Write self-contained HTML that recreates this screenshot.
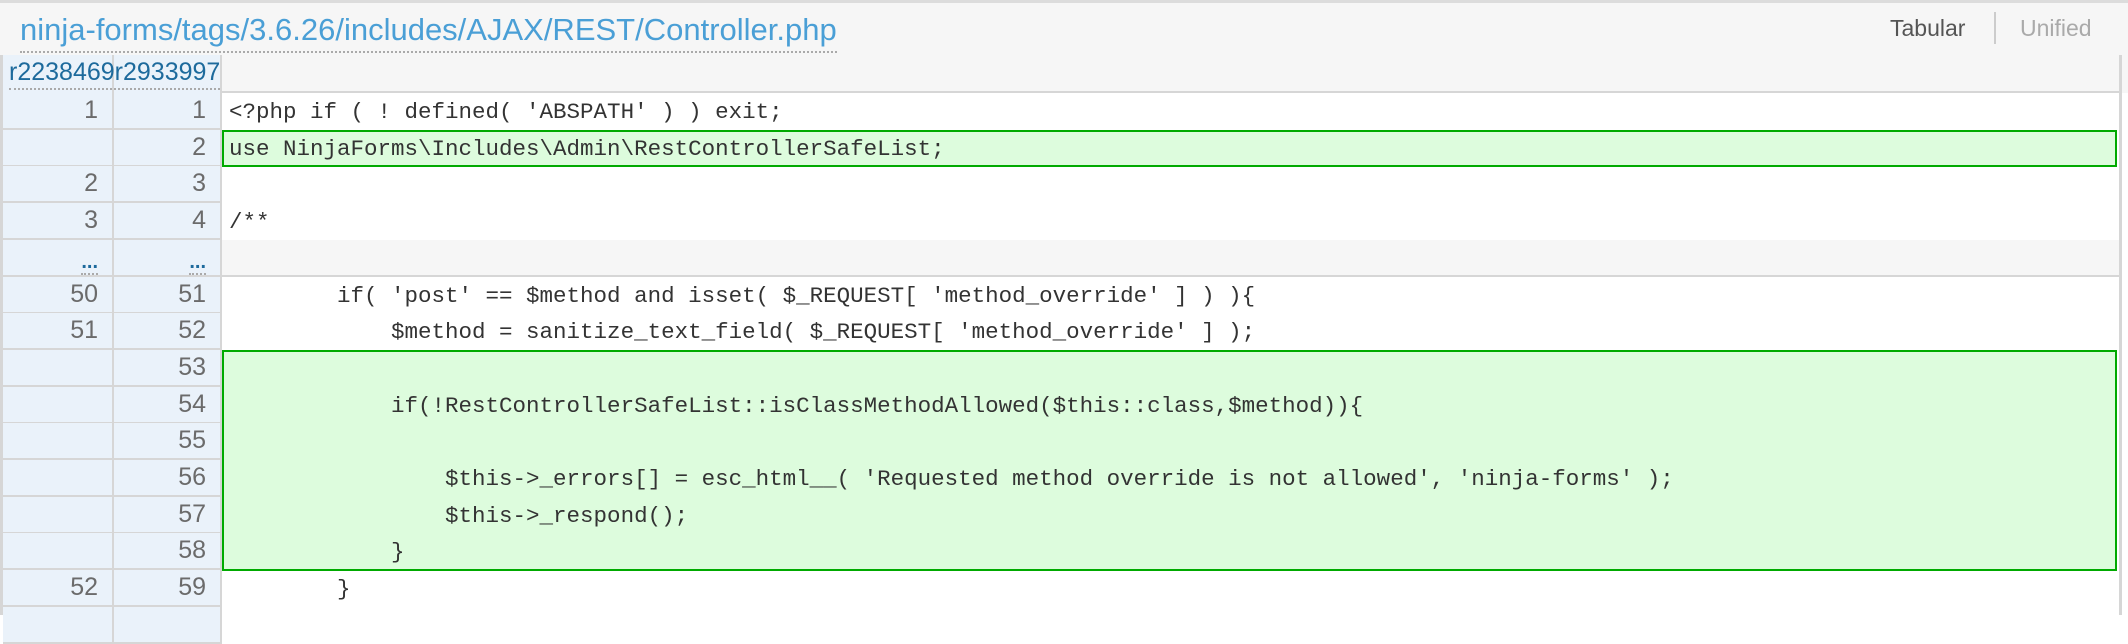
<!DOCTYPE html>
<html><head><meta charset="utf-8"><style>
*{margin:0;padding:0;box-sizing:border-box}
body{width:2128px;height:613px;overflow:hidden;background:#fff;position:relative;font-family:"Liberation Sans",sans-serif}
.a{position:absolute}
.ln{position:absolute;background:#eaf2fa;color:#6b6b6b;font-size:25px;text-align:right;padding-right:14px;line-height:35px;border-bottom:2px solid #d6d6d6}
.code{position:absolute;left:229px;font-family:"Liberation Mono",monospace;font-size:22.5px;color:#333;white-space:pre;line-height:36px}
</style></head><body>
<div class="a" style="left:0;top:0;width:2128px;height:3px;background:#dcdcdc"></div>
<div class="a" style="left:0;top:3px;width:2128px;height:90px;background:#f6f6f6"></div>
<div class="a" style="left:2119px;top:55px;width:3px;height:560px;background:#d6d6d6"></div>
<div class="a" style="left:20px;top:9px;font-size:31px;color:#4a9fd6;white-space:nowrap;border-bottom:2px dotted #aaa;line-height:42px">ninja-forms/tags/3.6.26/includes/AJAX/REST/Controller.php</div>
<div class="a" style="left:1890px;top:13px;font-size:23px;color:#555;line-height:30px">Tabular</div>
<div class="a" style="left:1994px;top:12px;width:2px;height:32px;background:#ccc"></div>
<div class="a" style="left:2020px;top:13px;font-size:23px;color:#aaa;line-height:30px">Unified</div>
<div class="a" style="left:3px;top:55px;width:219px;height:38px;background:#eaf2fa;border-right:2px solid #d6d6d6"></div>
<div class="a" style="left:112px;top:55px;width:2px;height:38px;background:#d6d6d6"></div>
<div class="a" style="left:222px;top:91px;width:1897px;height:2px;background:#d6d6d6"></div>
<div class="a" style="left:9px;top:57px;font-size:25px;color:#1d6a9c;line-height:31px;border-bottom:2px dotted #aaa;white-space:nowrap">r2238469r2933997</div>
<div class="a" style="left:0;top:55px;width:3px;height:560px;background:#d6d6d6"></div>
<div id="rows"></div>
<script>
var rows=[["1","1","<?php if ( ! defined( 'ABSPATH' ) ) exit;",0],["","2","use NinjaForms\\Includes\\Admin\\RestControllerSafeList;",1],["2","3","",0],["3","4","/**",0],["…","…","",2],["50","51","        if( 'post' == $method and isset( $_REQUEST[ 'method_override' ] ) ){",0],["51","52","            $method = sanitize_text_field( $_REQUEST[ 'method_override' ] );",0],["","53","",1],["","54","            if(!RestControllerSafeList::isClassMethodAllowed($this::class,$method)){",1],["","55","",1],["","56","                $this->_errors[] = esc_html__( 'Requested method override is not allowed', 'ninja-forms' );",1],["","57","                $this->_respond();",1],["","58","            }",1],["52","59","        }",0],["","","",0]];
var h="";
for(var i=0;i<rows.length;i++){var r=rows[i];var t=93+i*36.7;
if(r[3]==2){h+='<div class="a" style="left:222px;top:'+t+'px;width:1897px;height:37px;background:#f6f6f6;border-bottom:2px solid #d6d6d6"></div>';
h+='<div class="ln" style="left:3px;top:'+t+'px;width:109px;height:37px;color:#1d6a9c;font-size:20px;font-weight:bold;line-height:44px"><span style="border-bottom:2px dotted #aaa">...</span></div>';
h+='<div class="ln" style="left:112px;top:'+t+'px;width:110px;height:37px;border-left:2px solid #d6d6d6;border-right:2px solid #d6d6d6;color:#1d6a9c;font-size:20px;font-weight:bold;line-height:44px"><span style="border-bottom:2px dotted #aaa">...</span></div>';continue;}
h+='<div class="ln" style="left:3px;top:'+t+'px;width:109px;height:37px">'+r[0]+'</div>';
h+='<div class="ln" style="left:112px;top:'+t+'px;width:110px;height:37px;border-left:2px solid #d6d6d6;border-right:2px solid #d6d6d6">'+r[1]+'</div>';
var c=r[2].replace(/&/g,"&amp;").replace(/</g,"&lt;").replace(/>/g,"&gt;");
h+='<div class="code" style="top:'+(t+1)+'px">'+c+'</div>';}
document.getElementById("rows").innerHTML=h;
</script>
<div class="a" style="left:222px;top:129.7px;width:1895px;height:37px;border:2.5px solid #0a0;background:#ddfcdd"></div>
<div class="a" style="left:222px;top:349.9px;width:1895px;height:221px;border:2.5px solid #0a0;background:#ddfcdd"></div>
<div class="code" style="top:130.7px">use NinjaForms\Includes\Admin\RestControllerSafeList;</div>
<div class="code" style="top:387.6px">            if(!RestControllerSafeList::isClassMethodAllowed($this::class,$method)){</div>
<div class="code" style="top:460.9px">                $this-&gt;_errors[] = esc_html__( 'Requested method override is not allowed', 'ninja-forms' );</div>
<div class="code" style="top:497.7px">                $this-&gt;_respond();</div>
<div class="code" style="top:534.4px">            }</div>
</body></html>
